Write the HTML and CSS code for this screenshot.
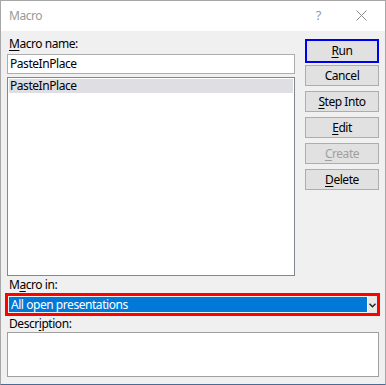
FILE: index.html
```html
<!DOCTYPE html>
<html>
<head>
<meta charset="utf-8">
<link rel="stylesheet" href="styles.css">
</head>
<body>
<div class="window">
  <div class="titlebar">
    <span class="title">Macro</span>
    <span class="help">?</span>
    <svg class="close" width="11" height="11" viewBox="0 0 11 11"><path d="M0.5 0.5 L10.5 10.5 M10.5 0.5 L0.5 10.5" stroke="#8a8a8a" stroke-width="1" fill="none"/></svg>
  </div>
  <div class="content">
    <div class="top">
      <div class="left">
        <div class="label"><u>M</u>acro name:</div>
        <div class="input">PasteInPlace</div>
        <div class="list">
          <div class="item selected">PasteInPlace</div>
        </div>
      </div>
      <div class="buttons">
        <div class="btn default"><u>R</u>un</div>
        <div class="btn cancel">Cancel</div>
        <div class="btn"><u>S</u>tep Into</div>
        <div class="btn"><u>E</u>dit</div>
        <div class="btn disabled"><u>C</u>reate</div>
        <div class="btn"><u>D</u>elete</div>
      </div>
    </div>
    <div class="label in">M<u>a</u>cro in:</div>
    <div class="combo-annot">
      <div class="combo">
        <div class="combo-value">All open presentations</div>
        <div class="combo-btn"><svg width="7" height="5" viewBox="0 0 7 5"><path d="M0.5 0.8 L3.5 3.8 L6.5 0.8" stroke="#222" stroke-width="1.4" fill="none"/></svg></div>
      </div>
    </div>
    <div class="label desc">Descr<u>i</u>ption:</div>
    <div class="textarea"></div>
  </div>
</div>
</body>
</html>
```
FILE: styles.css
```css
html, body {
  margin: 0;
  padding: 0;
}
body {
  font-family: "Noto Sans", "Open Sans", sans-serif;
  font-size: 12px;
  letter-spacing: -0.45px;
  color: #000;
  background: #f0f0f0;
}
.window {
  width: 386px;
  height: 385px;
  box-sizing: border-box;
  border: 1px solid #a7a7a7;
  border-bottom: 1px solid #4b6a95;
  background: #f0f0f0;
  display: flex;
  flex-direction: column;
}
.titlebar {
  height: 30px;
  background: #fff;
  display: flex;
  align-items: center;
  padding-left: 8px;
  flex-shrink: 0;
}
.title {
  color: #999;
  font-size: 12px;
  flex: 1;
  margin-top: -1px;
}
.help {
  color: #999;
  font-size: 13px;
  margin-right: 35px;
  margin-top: -2px;
}
.close {
  margin-right: 18px;
  margin-top: -2px;
}
.content {
  padding: 0 6px;
  display: flex;
  flex-direction: column;
}
.top {
  display: flex;
}
.left {
  width: 288px;
  display: flex;
  flex-direction: column;
}
.label {
  line-height: 16px;
  height: 16px;
  padding-left: 2px;
  margin-top: 5px;
  white-space: nowrap;
}
.label u {
  text-underline-offset: 2px;
}
.input {
  margin-top: 2px;
  height: 20px;
  box-sizing: border-box;
  border: 1px solid #adadad;
  background: #fff;
  padding-left: 2px;
  line-height: 18px;
}
.list {
  margin-top: 3px;
  height: 199px;
  box-sizing: border-box;
  border: 1px solid #828790;
  background: #fff;
  padding: 1px;
}
.item {
  height: 14px;
  line-height: 14px;
  padding-left: 1px;
}
.item.selected {
  background: #dedee3;
}
.buttons {
  margin-left: 10px;
  width: 74px;
  display: flex;
  flex-direction: column;
  padding-top: 8px;
}
.btn {
  height: 21px;
  box-sizing: border-box;
  border: 1px solid #adadad;
  background: #e1e1e1;
  text-align: center;
  line-height: 19px;
  margin-bottom: 5px;
}
.btn u {
  text-underline-offset: 2px;
}
.btn.default {
  height: 24px;
  border: 2px solid #0000f0;
  line-height: 20px;
  margin-bottom: 2px;
}
.btn.disabled {
  color: #a0a0a0;
}
.label.in {
  margin-top: 1px;
}
.combo-annot {
  margin: 0 -1px 0 -2px;
  border: 3px solid #f00;
  height: 23px;
  box-sizing: border-box;
}
.combo {
  height: 17px;
  display: flex;
  border: 0;
}
.combo-value {
  flex: 1;
  background: #0078d7;
  color: #fff;
  line-height: 15px;
  padding-left: 2px;
  border: 1px solid #f0f0f0;
  border-right: 1px solid #fff;
  margin-left: 0;
}
.combo-btn {
  width: 9px;
  display: flex;
  align-items: center;
  justify-content: center;
  background: #e8e8e8;
  padding-top: 1px;
}
.label.desc {
  margin-top: 0;
}
.textarea {
  margin-top: 0;
  height: 45px;
  box-sizing: border-box;
  border: 1px solid #a0a0a0;
  background: #fff;
}
```
